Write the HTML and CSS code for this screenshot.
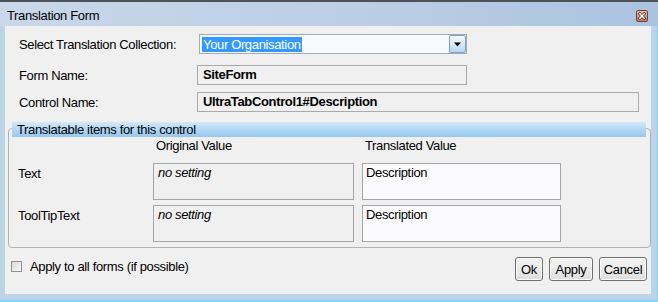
FILE: index.html
```html
<!DOCTYPE html>
<html>
<head>
<meta charset="utf-8">
<link rel="stylesheet" href="styles.css">
</head>
<body>
<div class="window">
  <div class="titlebar">
    <span class="title">Translation Form</span>
    <svg class="close" width="12" height="12" viewBox="0 0 12 12">
      <defs>
        <linearGradient id="cg" x1="0" y1="0" x2="0" y2="1">
          <stop offset="0" stop-color="#e9c2ba"/>
          <stop offset="1" stop-color="#c1786a"/>
        </linearGradient>
      </defs>
      <rect x="0.5" y="0.5" width="11" height="11" rx="1.5" fill="url(#cg)" stroke="#7d3c33"/>
      <path d="M3.8 3.8 L8.2 8.2 M8.2 3.8 L3.8 8.2" stroke="#5b2a24" stroke-width="3" stroke-linecap="square"/>
      <path d="M3.8 3.8 L8.2 8.2 M8.2 3.8 L3.8 8.2" stroke="#ffffff" stroke-width="1.5" stroke-linecap="square"/>
    </svg>
  </div>
  <div class="client">
    <div class="row row-combo">
      <span class="lbl">Select Translation Collection:</span>
      <div class="combo">
        <span class="sel">Your Organisation</span>
        <span class="ddbtn">
          <svg width="9" height="5" viewBox="0 0 9 5"><path d="M1 0.5 H8 L4.5 4.5 Z" fill="#000"/></svg>
        </span>
      </div>
    </div>
    <div class="row row-form">
      <span class="lbl">Form Name:</span>
      <div class="tb tb-short">SiteForm</div>
    </div>
    <div class="row row-ctrl">
      <span class="lbl">Control Name:</span>
      <div class="tb tb-long">UltraTabControl1#Description</div>
    </div>
    <div class="group">
      <div class="ghead">Translatable items for this control</div>
      <div class="grid">
        <span></span>
        <span class="colh">Original Value</span>
        <span class="colh">Translated Value</span>
        <span class="rlbl">Text</span>
        <div class="box orig">no setting</div>
        <div class="box trans">Description</div>
        <span class="rlbl">ToolTipText</span>
        <div class="box orig">no setting</div>
        <div class="box trans">Description</div>
      </div>
    </div>
    <div class="footer">
      <label class="chk"><span class="cbox"></span>Apply to all forms (if possible)</label>
      <div class="buttons">
        <button class="btn b-ok">Ok</button>
        <button class="btn b-apply">Apply</button>
        <button class="btn b-cancel">Cancel</button>
      </div>
    </div>
  </div>
</div>
</body>
</html>
```
FILE: styles.css
```css
html, body {
  margin: 0;
  padding: 0;
}
body {
  width: 658px;
  height: 302px;
  overflow: hidden;
  font-family: "Liberation Sans", Arial, sans-serif;
  font-size: 13px;
  letter-spacing: -0.35px;
  color: #000;
}
.window {
  width: 658px;
  height: 302px;
  box-sizing: border-box;
  border-top: 2px solid #4e5257;
  background: #bdd3ea;
  box-shadow: inset -1px -2px 0 #86d2f2;
  display: flex;
  flex-direction: column;
}
.titlebar {
  height: 24px;
  box-sizing: border-box;
  padding: 4px 10px 0 7px;
  display: flex;
  align-items: center;
  justify-content: space-between;
  background: linear-gradient(to right, #c9d8ea, #b9cde5 60%, #aac3df);
}
.title {
  line-height: 16px;
}
.close {
  display: block;
  margin-top: -1px;
}
.client {
  margin-left: 5px;
  width: 646px;
  height: 268px;
  box-sizing: border-box;
  background: #f0f0f0;
  padding-top: 8px;
}
.row {
  display: flex;
  align-items: center;
  padding-left: 14px;
  height: 20px;
}
.row-form {
  margin-top: 11px;
}
.row-ctrl {
  margin-top: 7px;
}
.lbl {
  width: 178px;
  flex: none;
}
.combo {
  margin-left: 2px;
  width: 268px;
  height: 20px;
  box-sizing: border-box;
  border: 1px solid #a3abb5;
  background: #f7f9fd;
  display: flex;
  align-items: center;
  justify-content: space-between;
  padding-left: 2px;
}
.sel {
  background: #3399ff;
  color: #fff;
  line-height: 15px;
  height: 15px;
  padding: 0 1px;
}
.ddbtn {
  width: 17px;
  height: 18px;
  box-sizing: border-box;
  border: 1px solid #7f9fc6;
  border-radius: 2px;
  background: linear-gradient(#f6f9fd, #dcebf9 45%, #b3d6f4);
  display: flex;
  align-items: center;
  justify-content: center;
}
.ddbtn svg {
  display: block;
}
.tb {
  height: 20px;
  box-sizing: border-box;
  border: 1px solid #aaaaaa;
  background: #f0f0f0;
  font-weight: bold;
  padding-left: 5px;
  line-height: 18px;
}
.tb-short {
  width: 270px;
}
.tb-long {
  width: 442px;
}
.group {
  margin: 16px 0 0 3px;
  width: 643px;
  height: 120px;
  box-sizing: border-box;
  border: 1px solid #b2b2b2;
  border-radius: 4px;
}
.ghead {
  margin: -7px 4px 0 3px;
  height: 15px;
  line-height: 15px;
  padding-left: 5px;
  background: linear-gradient(#d3e8fa, #b3d8f5 50%, #94c7ef);
}
.grid {
  display: grid;
  grid-template-columns: 127px 201px 199px;
  grid-template-rows: 20px 37px 37px;
  column-gap: 8px;
  row-gap: 5px;
  padding: 1px 0 0 9px;
}
.colh {
  line-height: 15px;
  padding-left: 3px;
}
.rlbl {
  line-height: 15px;
  padding-top: 3px;
}
.box {
  box-sizing: border-box;
  border: 1px solid #a5a5a5;
  line-height: 15px;
  padding: 1px 0 0 4px;
}
.orig {
  background: #f0f0f0;
  font-style: italic;
}
.trans {
  background: #fbfbfe;
  padding-left: 3px;
}
.footer {
  margin-top: 9px;
  display: flex;
  justify-content: space-between;
  align-items: flex-start;
  padding: 0 4px 0 6px;
}
.chk {
  display: flex;
  align-items: center;
  margin-top: 2px;
  line-height: 15px;
}
.cbox {
  width: 11px;
  height: 11px;
  box-sizing: border-box;
  border: 1px solid #8e8f8f;
  background: linear-gradient(135deg, #dcdcdc, #f6f6f6);
  margin-right: 8px;
}
.buttons {
  display: flex;
  gap: 6px;
}
.btn {
  height: 24px;
  box-sizing: border-box;
  border: 1px solid #707070;
  border-radius: 3px;
  background: linear-gradient(#f3f3f3, #ebebeb 50%, #dddddd);
  font-family: "Liberation Sans", Arial, sans-serif;
  font-size: 13px;
  letter-spacing: -0.35px;
  color: #000;
  padding: 0;
  box-shadow: inset 0 0 0 1px #fcfcfc;
}
.b-ok {
  width: 28px;
}
.b-apply {
  width: 44px;
}
.b-cancel {
  width: 48px;
}
```
